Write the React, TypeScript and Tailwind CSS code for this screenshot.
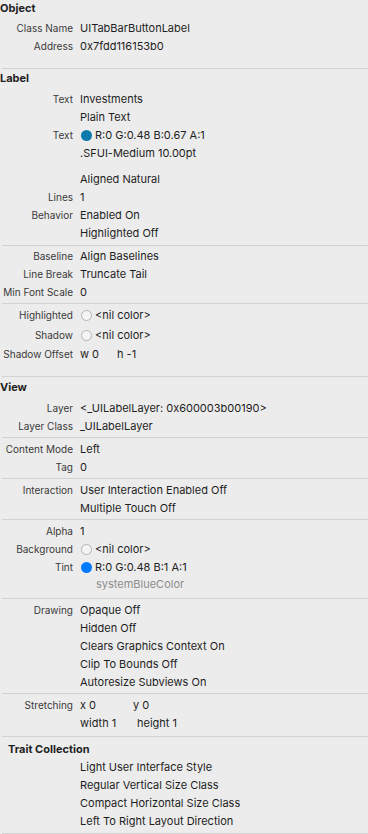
import type { ReactNode } from 'react';

type RowProps = {
  label?: string;
  children: ReactNode;
  tall?: boolean;
};

function Row({ label, children, tall }: RowProps) {
  return (
    <div className={`grid grid-cols-[73px_1fr] gap-x-[7px] items-center ${tall ? 'h-[20px]' : 'h-[18px]'}`}>
      <span className="text-right text-[10px] text-[#3a3a3a] whitespace-nowrap">{label ?? ''}</span>
      <span className="text-[11px] text-[#1e1e1e] whitespace-nowrap flex items-center">{children}</span>
    </div>
  );
}

function Swatch({ color }: { color?: string }) {
  if (!color) {
    return <span className="inline-block w-[11px] h-[11px] rounded-full border border-[#b4b4b4] bg-[#f4f4f4] ml-[1px] mr-[3px]" />;
  }
  return <span className="inline-block w-[11px] h-[11px] rounded-full ml-[1px] mr-[3px]" style={{ backgroundColor: color }} />;
}

function Header({ title, inset }: { title: string; inset?: boolean }) {
  return (
    <div className={`h-[18px] flex items-center text-[11px] font-bold text-[#1f1f1f] ${inset ? 'pl-[8px]' : ''}`}>
      {title}
    </div>
  );
}

function Divider() {
  return <div className="h-px bg-[#d2d2d2] ml-[2px]" />;
}

export default function App() {
  return (
    <div
      className="w-[368px] h-[834px] overflow-hidden bg-[#ececec] select-none"
      style={{ fontFamily: 'Inter, "Liberation Sans", sans-serif' }}
    >
      {/* Object */}
      <div className="-mt-[1px] pb-[13px]">
        <Header title="Object" />
        <div className="pt-[2px]">
          <Row label="Class Name">UITabBarButtonLabel</Row>
          <Row label="Address">0x7fdd116153b0</Row>
        </div>
      </div>
      <Divider />

      {/* Label */}
      <div className="pb-[3px]">
        <Header title="Label" />
        <div className="pt-[3px]">
          <Row label="Text">Investments</Row>
          <Row>Plain Text</Row>
          <Row label="Text">
            <Swatch color="#0d7aab" />
            R:0 G:0.48 B:0.67 A:1
          </Row>
          <Row>.SFUI-Medium 10.00pt</Row>
          <div className="h-[8px]" />
          <Row>Aligned Natural</Row>
          <Row label="Lines">1</Row>
          <Row label="Behavior">Enabled On</Row>
          <Row>Highlighted Off</Row>
        </div>
      </div>
      <Divider />
      <div className="pt-[1px] pb-[2px]">
        <Row label="Baseline">Align Baselines</Row>
        <Row label="Line Break">Truncate Tail</Row>
        <Row label="Min Font Scale">0</Row>
      </div>
      <Divider />
      <div className="pt-[1px] pb-[13px]">
        <Row label="Highlighted" tall>
          <Swatch />
          &lt;nil color&gt;
        </Row>
        <Row label="Shadow" tall>
          <Swatch />
          &lt;nil color&gt;
        </Row>
        <Row label="Shadow Offset">
          <span className="w-[37px]">w 0</span>
          <span>h -1</span>
        </Row>
      </div>
      <Divider />

      {/* View */}
      <div className="pt-[1px] pb-[2px]">
        <Header title="View" />
        <div className="pt-[3px]">
          <Row label="Layer">&lt;_UILabelLayer: 0x600003b00190&gt;</Row>
          <Row label="Layer Class">_UILabelLayer</Row>
        </div>
      </div>
      <Divider />
      <div className="pt-[2px] pb-[2px]">
        <Row label="Content Mode">Left</Row>
        <Row label="Tag">0</Row>
      </div>
      <Divider />
      <div className="pt-[2px] pb-[2px]">
        <Row label="Interaction">User Interaction Enabled Off</Row>
        <Row>Multiple Touch Off</Row>
      </div>
      <Divider />
      <div className="pt-[2px] pb-[8px]">
        <Row label="Alpha">1</Row>
        <Row label="Background">
          <Swatch />
          &lt;nil color&gt;
        </Row>
        <Row label="Tint">
          <Swatch color="#007aff" />
          R:0 G:0.48 B:1 A:1
        </Row>
        <div className="grid grid-cols-[73px_1fr] gap-x-[7px] h-[14px] items-center">
          <span />
          <span className="pl-[16px] text-[11px] text-[#8c8c8c] whitespace-nowrap">systemBlueColor</span>
        </div>
      </div>
      <Divider />
      <div className="pt-[2px] pb-[2px]">
        <Row label="Drawing">Opaque Off</Row>
        <Row>Hidden Off</Row>
        <Row>Clears Graphics Context On</Row>
        <Row>Clip To Bounds Off</Row>
        <Row>Autoresize Subviews On</Row>
      </div>
      <Divider />
      <div className="pt-[2px] pb-[4px]">
        <Row label="Stretching">
          <span className="w-[53px]">x 0</span>
          <span>y 0</span>
        </Row>
        <Row>
          <span className="w-[57px]">width 1</span>
          <span>height 1</span>
        </Row>
      </div>
      <Divider />
      <div className="pt-[3px] pb-[3px]">
        <Header title="Trait Collection" inset />
        <Row>Light User Interface Style</Row>
        <Row>Regular Vertical Size Class</Row>
        <Row>Compact Horizontal Size Class</Row>
        <Row>Left To Right Layout Direction</Row>
      </div>
      <Divider />
    </div>
  );
}
